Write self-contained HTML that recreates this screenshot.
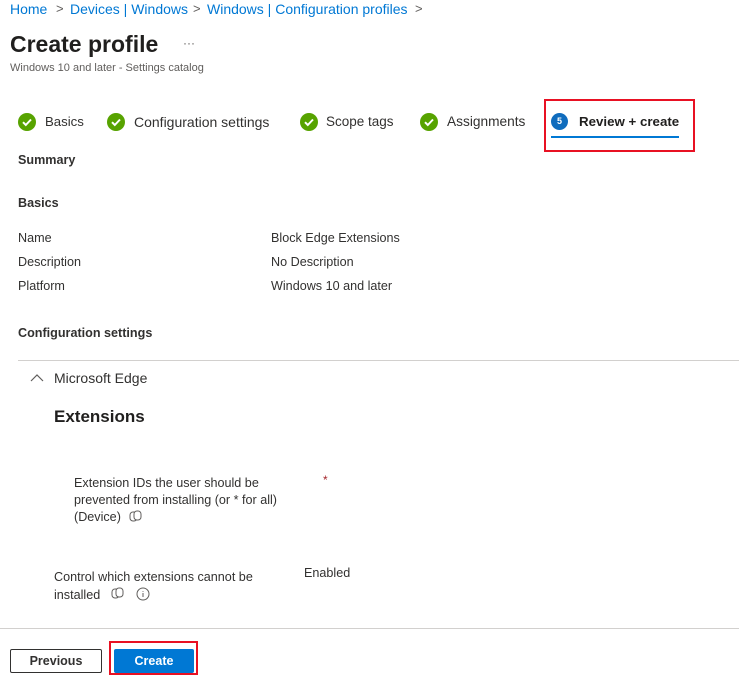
<!DOCTYPE html>
<html><head><meta charset="utf-8"><style>
*{margin:0;padding:0;box-sizing:border-box}
body{width:739px;height:675px;background:#fff;font-family:"Liberation Sans",sans-serif;color:#323130;font-size:12.6px;position:relative;overflow:hidden}
.a{position:absolute;white-space:nowrap;line-height:16px}
.bc{color:#0078d4;font-size:14px}
.sep{color:#605e5c;font-size:13px}
.chk{position:absolute;width:18px;height:18px;border-radius:50%;background:#57a300;top:113px}
.chk svg{position:absolute;left:0;top:0}
.st{top:114px;font-size:14px;color:#323130}
.b{font-weight:bold}
</style></head><body>
<div class="a bc" style="left:10px;top:1px">Home</div>
<div class="a sep" style="left:56px;top:1px">&gt;</div>
<div class="a bc" style="left:70px;top:1px">Devices | Windows</div>
<div class="a sep" style="left:193px;top:1px">&gt;</div>
<div class="a bc" style="left:207px;top:1px">Windows | Configuration profiles</div>
<div class="a sep" style="left:415px;top:1px">&gt;</div>
<div class="a" style="left:10px;top:30px;font-size:23px;line-height:28px;font-weight:bold;color:#201f1e">Create profile</div>
<div class="a" style="left:183px;top:35px;font-size:12px;color:#605e5c">···</div>
<div class="a" style="left:10px;top:60px;font-size:11px;color:#605e5c">Windows 10 and later - Settings catalog</div>

<div class="chk" style="left:18px"><svg width="18" height="18"><path d="M5 9.2l2.8 2.8 5.2-5.5" stroke="#fff" stroke-width="2" fill="none"/></svg></div>
<div class="a st" style="left:45px;font-size:13.2px">Basics</div>
<div class="chk" style="left:107px"><svg width="18" height="18"><path d="M5 9.2l2.8 2.8 5.2-5.5" stroke="#fff" stroke-width="2" fill="none"/></svg></div>
<div class="a st" style="left:134px">Configuration settings</div>
<div class="chk" style="left:300px"><svg width="18" height="18"><path d="M5 9.2l2.8 2.8 5.2-5.5" stroke="#fff" stroke-width="2" fill="none"/></svg></div>
<div class="a st" style="left:326px;font-size:13.5px">Scope tags</div>
<div class="chk" style="left:420px"><svg width="18" height="18"><path d="M5 9.2l2.8 2.8 5.2-5.5" stroke="#fff" stroke-width="2" fill="none"/></svg></div>
<div class="a st" style="left:447px;font-size:13.7px">Assignments</div>
<div style="position:absolute;left:551px;top:113px;width:17px;height:17px;border-radius:50%;background:#0f6cbd;color:#fff;font-size:9px;font-weight:bold;text-align:center;line-height:17px">5</div>
<div class="a st b" style="left:579px;color:#201f1e;font-size:13.3px">Review + create</div>
<div style="position:absolute;left:551px;top:136px;width:128px;height:2px;background:#0078d4"></div>
<div style="position:absolute;left:544px;top:99px;width:151px;height:53px;border:2px solid #e81123"></div>

<div class="a b" style="left:18px;top:152px">Summary</div>
<div class="a b" style="left:18px;top:195px">Basics</div>
<div class="a" style="left:18px;top:230px">Name</div>
<div class="a" style="left:271px;top:230px">Block Edge Extensions</div>
<div class="a" style="left:18px;top:254px">Description</div>
<div class="a" style="left:271px;top:254px">No Description</div>
<div class="a" style="left:18px;top:278px">Platform</div>
<div class="a" style="left:271px;top:278px">Windows 10 and later</div>
<div class="a b" style="left:18px;top:325px">Configuration settings</div>
<div style="position:absolute;left:18px;top:360px;width:721px;height:1px;background:#d2d0ce"></div>
<svg style="position:absolute;left:30px;top:373px" width="14" height="10"><path d="M1 8l6-6 6 6" stroke="#605e5c" stroke-width="1.2" fill="none"/></svg>
<div class="a" style="left:54px;top:370px;font-size:14px">Microsoft Edge</div>
<div class="a b" style="left:54px;top:407px;font-size:17px;line-height:20px;color:#201f1e">Extensions</div>
<div class="a" style="left:74px;top:475px;line-height:17px">Extension IDs the user should be<br>prevented from installing (or * for all)<br>(Device)</div>
<svg style="position:absolute;left:129px;top:510px" width="14" height="13"><rect x="1" y="2" width="7" height="9" rx="3" stroke="#605e5c" fill="none"/><rect x="5" y="1" width="7" height="9" rx="3" stroke="#605e5c" fill="#fff"/></svg>
<div class="a" style="left:323px;top:472px;color:#a4262c;font-size:12px">*</div>
<div class="a" style="left:54px;top:568px;line-height:18px">Control which extensions cannot be<br>installed</div>
<svg style="position:absolute;left:111px;top:587px" width="14" height="13"><rect x="1" y="2" width="7" height="9" rx="3" stroke="#605e5c" fill="none"/><rect x="5" y="1" width="7" height="9" rx="3" stroke="#605e5c" fill="#fff"/></svg>
<svg style="position:absolute;left:136px;top:587px" width="14" height="14"><circle cx="7" cy="7" r="6" stroke="#605e5c" fill="none"/><path d="M7 6v4M7 4v.8" stroke="#605e5c"/></svg>
<div class="a" style="left:304px;top:565px">Enabled</div>
<div style="position:absolute;left:0;top:628px;width:739px;height:1px;background:#d2d0ce"></div>
<div style="position:absolute;left:10px;top:649px;width:92px;height:24px;border:1px solid #323130;border-radius:2px;text-align:center;line-height:22px;font-weight:bold;font-size:12.5px">Previous</div>
<div style="position:absolute;left:114px;top:649px;width:80px;height:24px;background:#0078d4;border-radius:2px;color:#fff;text-align:center;line-height:24px;font-weight:bold;font-size:12.5px">Create</div>
<div style="position:absolute;left:109px;top:641px;width:89px;height:34px;border:2px solid #e81123"></div>
</body></html>
